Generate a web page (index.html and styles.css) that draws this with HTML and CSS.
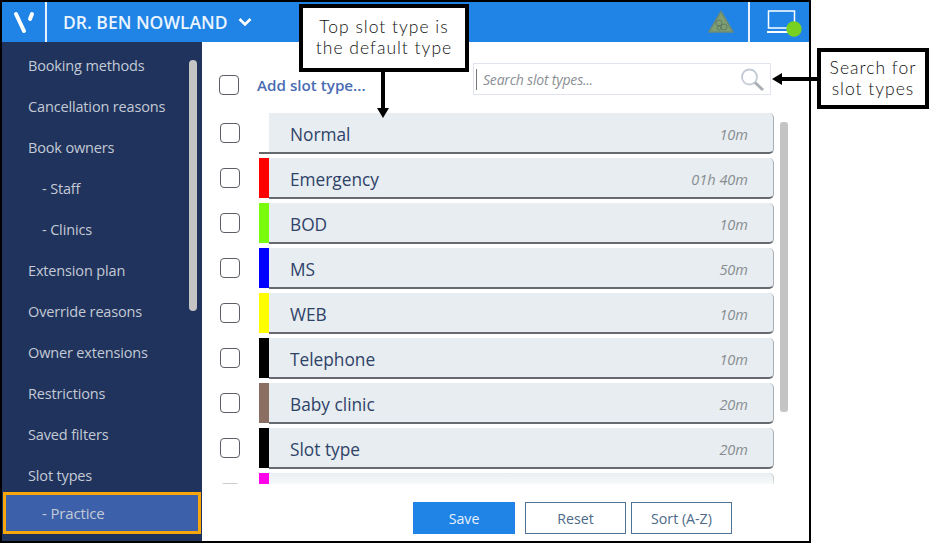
FILE: index.html
```html
<!DOCTYPE html>
<html lang="en">
<head>
<meta charset="utf-8">
<title>Slot types</title>
<link rel="stylesheet" href="styles.css">
</head>
<body>
<div class="app">
  <header class="topbar">
    <div class="logo-cell">
      <svg width="24" height="26" viewBox="0 0 24 26"><path d="M5 5 L13 22" stroke="#fff" stroke-width="4" stroke-linecap="round"/><path d="M21 5 L19 10" stroke="#fff" stroke-width="4" stroke-linecap="round"/></svg>
    </div>
    <div class="user">DR. BEN NOWLAND
      <svg class="chev" width="14" height="10" viewBox="0 0 14 10"><path d="M1.5 2 L7 7.5 L12.5 2" fill="none" stroke="#fff" stroke-width="2.6"/></svg>
    </div>
    <div class="warn">
      <svg width="26" height="24" viewBox="0 0 26 24"><path d="M13 1.5 L25 22 L1 22 Z" fill="#7f9f73" stroke="#6d8a75" stroke-width="1.5" stroke-linejoin="round"/><circle cx="11" cy="13" r="3" fill="none" stroke="#5d7a66"/><circle cx="16" cy="17" r="3" fill="none" stroke="#5d7a66"/><circle cx="11" cy="18" r="2" fill="none" stroke="#5d7a66"/></svg>
    </div>
    <div class="device">
      <svg width="38" height="32" viewBox="0 0 38 32"><rect x="3.5" y="5" width="26" height="17" fill="none" stroke="#fff" stroke-width="1.5"/><path d="M2 26 H30" stroke="#fff" stroke-width="2"/><circle cx="29" cy="23" r="7.7" fill="#78d021"/></svg>
    </div>
  </header>
  <div class="body">
    <nav class="sidebar">
      <a class="nav-item">Booking methods</a>
      <a class="nav-item">Cancellation reasons</a>
      <a class="nav-item">Book owners</a>
      <a class="nav-item sub">- Staff</a>
      <a class="nav-item sub">- Clinics</a>
      <a class="nav-item">Extension plan</a>
      <a class="nav-item">Override reasons</a>
      <a class="nav-item">Owner extensions</a>
      <a class="nav-item">Restrictions</a>
      <a class="nav-item">Saved filters</a>
      <a class="nav-item">Slot types</a>
      <a class="nav-item sub active">- Practice</a>
      <span class="nav-thumb"></span>
    </nav>
    <main class="main">
      <div class="toolbar">
        <span class="check"></span>
        <span class="add">Add slot type...</span>
        <div class="search">
          <span class="caret"></span>
          <span class="placeholder">Search slot types...</span>
          <svg class="glass" width="28" height="26" viewBox="0 0 28 26"><circle cx="10.5" cy="10" r="7.5" fill="none" stroke="#c3cbd6" stroke-width="1.8"/><path d="M16 15.5 L24 23" stroke="#a9aeb4" stroke-width="3"/></svg>
        </div>
      </div>
      <div class="list">
        <div class="row"><span class="check"></span><span class="swatch"></span><div class="card"><span class="name">Normal</span><span class="dur">10m</span></div></div>
        <div class="row"><span class="check"></span><span class="swatch red"></span><div class="card"><span class="name">Emergency</span><span class="dur">01h 40m</span></div></div>
        <div class="row"><span class="check"></span><span class="swatch green"></span><div class="card"><span class="name">BOD</span><span class="dur">10m</span></div></div>
        <div class="row"><span class="check"></span><span class="swatch blue"></span><div class="card"><span class="name">MS</span><span class="dur">50m</span></div></div>
        <div class="row"><span class="check"></span><span class="swatch yellow"></span><div class="card"><span class="name">WEB</span><span class="dur">10m</span></div></div>
        <div class="row"><span class="check"></span><span class="swatch black"></span><div class="card"><span class="name">Telephone</span><span class="dur">10m</span></div></div>
        <div class="row"><span class="check"></span><span class="swatch brown"></span><div class="card"><span class="name">Baby clinic</span><span class="dur">20m</span></div></div>
        <div class="row"><span class="check"></span><span class="swatch black"></span><div class="card"><span class="name">Slot type</span><span class="dur">20m</span></div></div>
        <div class="row"><span class="check"></span><span class="swatch magenta"></span><div class="card"></div></div>
        <span class="list-thumb"></span>
        <span class="list-fade"></span>
      </div>
      <div class="actions">
        <button class="btn primary">Save</button>
        <button class="btn">Reset</button>
        <button class="btn">Sort (A-Z)</button>
      </div>
    </main>
  </div>
  <div class="callout callout-top">Top slot type is<br>the default type</div>
  <div class="arrow-down"></div>
</div>
<div class="callout callout-search">Search for<br>slot types</div>
<div class="arrow-left"></div>
</body>
</html>
```

FILE: styles.css
```css
* { box-sizing: border-box; }
html, body { margin: 0; height: 100%; background: #fff; overflow: hidden; }
body { position: relative; font-family: "Open Sans", "Noto Sans", sans-serif; }

.app { width: 811px; height: 543px; border: 2px solid #000; display: flex; flex-direction: column; background: #fff; }

.topbar { height: 40px; flex: none; background: #1f84e6; display: flex; align-items: center; color: #fff; }
.logo-cell { width: 45px; height: 100%; border-right: 2px solid #e8f2fc; display: flex; align-items: center; justify-content: center; padding-right: 2px; }
.user { margin-left: 16px; font-size: 17.5px; font-weight: 600; letter-spacing: 0; flex: 1; display: flex; align-items: center; gap: 10px; color: #eaf4ff; }
.warn { width: 38px; display: flex; justify-content: center; margin-right: 8px; }
.device { width: 61px; height: 100%; border-left: 2px solid #e8f2fc; display: flex; align-items: center; padding-left: 15px; }

.body { flex: 1; display: flex; min-height: 0; }

.sidebar { width: 200px; flex: none; background: #20335c; position: relative; padding-top: 3px; display: flex; flex-direction: column; }
.nav-item { height: 41px; flex: none; display: flex; align-items: center; padding-left: 26px; font-size: 14.5px; color: #c3cad6; letter-spacing: -0.15px; }
.nav-item.sub { padding-left: 40px; }
.nav-item.active { height: 42px; margin: -4px 0 0 1px; width: 198px; padding-left: 36px; font-size: 15px; background: #3c60a9; border: 3px solid #f7a70b; }
.nav-thumb { position: absolute; left: 187px; top: 18px; width: 8px; height: 251px; border-radius: 4px; background: #c4c4c4; }

.main { flex: 1; min-width: 0; display: flex; flex-direction: column; }

.toolbar { height: 69px; flex: none; display: flex; align-items: flex-start; padding: 33px 0 0 17px; position: relative; }
.check { display: block; width: 20px; height: 20px; border: 1.5px solid #5c5f66; border-radius: 4px; background: #fff; flex: none; }
.add { margin-left: 18px; font-size: 15.2px; font-weight: 600; color: #4a6cb3; line-height: 20px; }
.search { position: absolute; left: 271px; top: 21px; width: 298px; height: 32px; border: 1px solid #dfe4ee; display: flex; align-items: center; padding-left: 2px; }
.caret { width: 1px; height: 21px; background: #777; }
.placeholder { margin-left: 6px; font-size: 14px; font-style: italic; color: #8b8f96; letter-spacing: -0.2px; }
.glass { position: absolute; right: 3px; top: 3px; }

.list { height: 373px; flex: none; overflow: hidden; position: relative; padding-top: 2px; }
.row { height: 45px; display: flex; align-items: flex-start; padding-left: 18px; }
.row .check { margin: 10px 0 0 0; }
.swatch { width: 10px; height: 40px; margin-left: 19px; flex: none; position: relative; z-index: 1; }
.row:first-child .swatch { height: 41px; box-shadow: inset 0 -2px 0 #666; background: #fff; }
.red { background: #ff0000; }
.green { background: #78fb0c; }
.blue { background: #0000ff; }
.yellow { background: #ffff00; }
.black { background: #000; }
.brown { background: #8c6f63; }
.magenta { background: #ff00ea; }
.card { width: 505px; height: 41px; display: flex; align-items: center; justify-content: space-between; padding: 4px 25px 0 21px; background: #e7edf0; border-bottom: 2px solid #666a70; border-right: 1px solid #a9afb5; border-radius: 0 5px 5px 0; }
.name { font-size: 17.3px; color: #2e4268; }
.dur { font-size: 14.5px; font-style: italic; color: #888c90; }
.list-thumb { position: absolute; left: 578px; top: 11px; width: 8px; height: 290px; border-radius: 3px; background: #c4c4c4; }
.list-fade { position: absolute; left: 0; right: 14px; bottom: 0; height: 12px; background: linear-gradient(rgba(255,255,255,0), rgba(255,255,255,.7)); }

.actions { flex: 1; display: flex; align-items: flex-start; padding: 18px 0 0 211px; }
.btn { width: 101px; height: 32px; margin-right: 5px; background: #fff; border: 1px solid #4f7397; font-family: inherit; font-size: 14.2px; color: #4e6a8a; padding: 0; }
.btn.primary { width: 102px; background: #1f84e6; border-color: #1f84e6; color: #e6f1fc; margin-right: 10px; }

.callout { position: absolute; border: 4px solid #000; background: #fff; color: #111; font-family: "Lato", sans-serif; font-weight: 300; font-size: 17.5px; line-height: 21px; text-align: center; letter-spacing: 1px; display: flex; align-items: center; justify-content: center; padding-bottom: 2px; }
.callout-top { left: 299px; top: 4px; width: 170px; height: 68px; }
.callout-search { left: 817px; top: 48px; width: 112px; height: 61px; }
.arrow-down { position: absolute; left: 381px; top: 72px; width: 4px; height: 38px; background: #000; }
.arrow-down::after { content: ""; position: absolute; left: -4px; bottom: -8px; border: 6px solid transparent; border-top: 10px solid #000; border-bottom: 0; }
.arrow-left { position: absolute; left: 780px; top: 77px; width: 37px; height: 4px; background: #000; }
.arrow-left::before { content: ""; position: absolute; left: -8px; top: -4px; border: 6px solid transparent; border-right: 10px solid #000; border-left: 0; }
```
